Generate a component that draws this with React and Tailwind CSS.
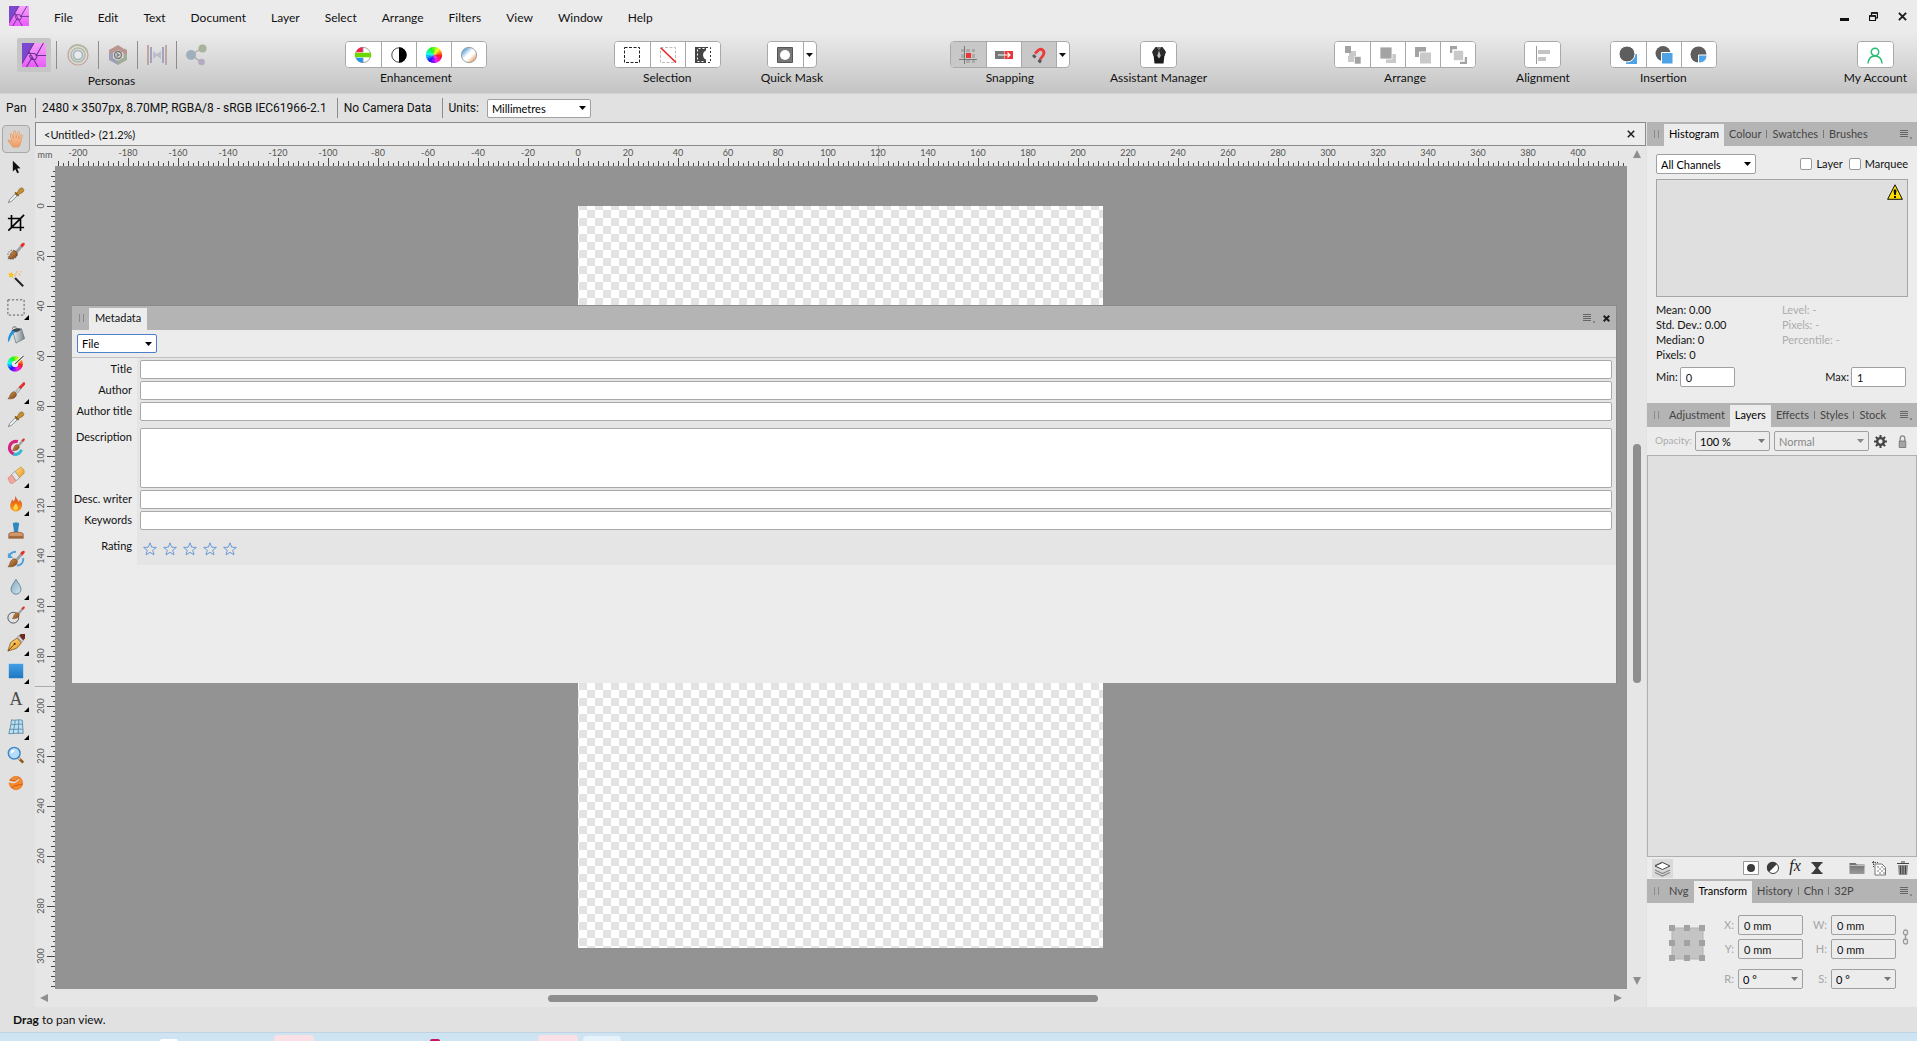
import React, { useState } from 'react';

const menus = ['File', 'Edit', 'Text', 'Document', 'Layer', 'Select', 'Arrange', 'Filters', 'View', 'Window', 'Help'];

const Svg = ({ size = 20, box = 20, children, className = '' }) => (
  <svg width={size} height={size} viewBox={`0 0 ${box} ${box}`} className={`shrink-0 ${className}`} fill="none" aria-hidden="true">
    {children}
  </svg>
);

const Defs = () => (
  <svg width="0" height="0" className="absolute" aria-hidden="true">
    <defs>
      <linearGradient id="pink" x1="0" y1="0" x2="0" y2="1">
        <stop offset="0" stopColor="#f7a0fb" />
        <stop offset="1" stopColor="#e95cf8" />
      </linearGradient>
      <linearGradient id="skin" x1="0" y1="0" x2="0" y2="1">
        <stop offset="0" stopColor="#fcd3ae" />
        <stop offset="1" stopColor="#ee9a63" />
      </linearGradient>
      <linearGradient id="flame" x1="0" y1="0" x2="0" y2="1">
        <stop offset="0" stopColor="#d8431a" />
        <stop offset="1" stopColor="#fba01c" />
      </linearGradient>
      <linearGradient id="sky" x1="0" y1="0" x2="0" y2="1">
        <stop offset="0" stopColor="#429fe6" />
        <stop offset="1" stopColor="#1c76c0" />
      </linearGradient>
      <linearGradient id="gold" x1="0" y1="0" x2="1" y2="1">
        <stop offset="0" stopColor="#ffe08a" />
        <stop offset="1" stopColor="#e6931c" />
      </linearGradient>
      <linearGradient id="wood" x1="0" y1="0" x2="1" y2="1">
        <stop offset="0" stopColor="#d99a52" />
        <stop offset="1" stopColor="#7b4216" />
      </linearGradient>
      <linearGradient id="steel" x1="0" y1="0" x2="1" y2="0">
        <stop offset="0" stopColor="#f0f3f4" />
        <stop offset="1" stopColor="#76858b" />
      </linearGradient>
      <linearGradient id="water" x1="0" y1="0" x2="1" y2="1">
        <stop offset="0" stopColor="#7fa9bf" />
        <stop offset="1" stopColor="#d4e6ee" />
      </linearGradient>
      <linearGradient id="warmcool" x1="0" y1="0" x2="1" y2="1">
        <stop offset="0.1" stopColor="#3d92d4" />
        <stop offset="0.45" stopColor="#ffffff" />
        <stop offset="0.6" stopColor="#ffffff" />
        <stop offset="0.95" stopColor="#e27a32" />
      </linearGradient>
      <linearGradient id="folder" x1="0" y1="0" x2="0" y2="1">
        <stop offset="0" stopColor="#6e6e6e" />
        <stop offset="1" stopColor="#9b9b9b" />
      </linearGradient>
    </defs>
  </svg>
);

const Logo = ({ size }) => (
  <Svg size={size} box={24}>
    <path d="M0 0h24v24H0z" fill="url(#pink)" />
    <path d="M0 0h12L0 20.500z" fill="#7b48cf" />
    <path d="M12 0 0 20.500M7 8.500 16 24M21.500 0 14 13M24 12.500H13.500M4.500 24 10 14.500M6 10.500h7M9 10.500 7.500 13l2 3.500h4l1.500-3-2-3" stroke="#6b3392" strokeWidth="1.100" />
  </Svg>
);

const Caret = ({ className = '' }) => (
  <svg width="7" height="4" viewBox="0 0 7 4" className={className} aria-hidden="true">
    <path d="M0 0h7L3.500 4z" fill="currentColor" />
  </svg>
);

const Close = ({ size = 8, weight = 1.8 }) => (
  <Svg size={size} box={8}>
    <path d="M.8.8l6.400 6.400M7.200.8.8 7.200" stroke="#1c1c1c" strokeWidth={weight} />
  </Svg>
);

const Grip = () => (
  <span className="mr-[5px] flex items-center text-[#8b8b8b]">
    <svg width="5" height="8" viewBox="0 0 5 8" aria-hidden="true"><path d="M.5 0v8M4.500 0v8" stroke="currentColor" /></svg>
  </span>
);

/* Colour wheel built from wedges so it works at any size */
const Wheel = ({ cx, cy, r }) => {
  const steps = 24;
  return Array.from({ length: steps }, (_, i) => {
    const a = (i / steps) * Math.PI * 2;
    const b = ((i + 1.2) / steps) * Math.PI * 2;
    return (
      <path
        key={i}
        d={`M${cx} ${cy}L${cx + r * Math.cos(a)} ${cy + r * Math.sin(a)}A${r} ${r} 0 0 1 ${cx + r * Math.cos(b)} ${cy + r * Math.sin(b)}z`}
        fill={`hsl(${360 - i * 15} 95% 52%)`}
      />
    );
  });
};

const BrushShape = ({ tip = '#e2312b' }) => (
  <>
    <path d="M9.500 10 15 3.500l2.500 2L12 12z" fill="#9ba3a8" />
    <path d="M14.500 3.500 17.500.8l2 .2.200 2-2.700 3z" fill={tip} />
    <path d="M1 18.500c2.500-.8 1.500-6.500 6-8.500 2-.8 4.500.8 4.500 3 0 4-5 6.500-10.500 5.500z" fill="url(#wood)" stroke="#6d3c17" strokeWidth=".6" />
  </>
);

const Picker = () => (
  <>
    <path d="M1.500 18.500 3 15l6-6 2 2-6 6z" fill="#f5f7f8" stroke="#6e7478" strokeWidth=".9" />
    <path d="m9 7 4 4" stroke="#80570f" strokeWidth="2" />
    <path d="m11 8.500 2-4c1-2.200 3-3 4.800-1.800 1.500 1.500 1 3.800-1.300 4.800l-4 2z" fill="#c68f35" stroke="#80570f" strokeWidth=".7" />
  </>
);

const tools = [
  { name: 'View', icon: <path d="M6.500 19c-1.500-2.500-3.500-4.500-5.300-6.600-.6-1.400 1.200-1.800 2.200-.8l2 1.800L3.600 5.200c-.3-1.600 1.600-1.900 2-.5L7.300 9.500 7.400 2c0-1.600 2.100-1.600 2.200 0l.6 7 1.700-6.500c.4-1.500 2.300-1.100 2.100.4L12.900 10l2.300-4.200c.8-1.300 2.400-.4 1.900.9C15.700 10 15.900 15.500 13 19z" fill="url(#skin)" stroke="#d98a55" strokeWidth=".6" /> },
  { name: 'Move', icon: <path d="M6.500 3v12l2.800-2.500 2 4.500 2-.9-2-4.400 3.700-.3z" fill="#111" /> },
  { name: 'Colour picker', icon: <Picker /> },
  { name: 'Crop', icon: <path d="M5 1v14h14M1 5h14v14M1.500 18.500 19 1" stroke="#000" strokeWidth="1.800" /> },
  { name: 'Selection brush', icon: <><BrushShape /><circle cx="6" cy="14" r="5" stroke="#444" strokeWidth="1" strokeDasharray="1.500 1.500" /></> },
  { name: 'Flood select', icon: <><path d="m7 7 11 11" stroke="#222" strokeWidth="2.200" /><path d="m6 6 3 3" stroke="#eee" strokeWidth="2.200" /><path d="M5 2l1 2.500L8.500 5 6.500 6.500 6.800 9 4.500 7.500 2 8.500l.8-2.600L1 4l2.600-.2z" fill="#f7c21a" /><path d="M10 1h2v2h-2zM13 4h2v2h-2zM9 4h1.500v1.500H9zM15 1h1.500v1.500H15z" fill="#f6bd7c" /></> },
  { name: 'Rectangular marquee', more: true, icon: <rect x="1" y="2" width="18" height="17" stroke="#555" strokeDasharray="2.500 2" /> },
  { name: 'Flood fill', icon: <><path d="M6 4.500 16 3l3.500 11L10 19z" fill="url(#steel)" stroke="#566" strokeWidth=".7" /><path d="M4.500 6c2-3 8-5 11-2.500-2 2.800-8 4.500-11 2.500z" fill="#38464c" /><path d="M7 5c-4 2-6 6-6 13 2-1 2.500-4 3.500-6C6 9 8 8 9.500 6.500z" fill="#2294dc" /><path d="M6 3c1-3 4-3 4.500 0v4" stroke="#555" strokeWidth="1" /></> },
  { name: 'Gradient', icon: <><Wheel cx={9} cy={11} r={8.500} /><circle cx="9" cy="11" r="3.500" fill="#e8e8e8" /><path d="M9 11 18.500 2" stroke="#fff" strokeWidth="3" /><path d="M9 11 18.500 2" stroke="#444" strokeWidth="1.200" /></> },
  { name: 'Paint brush', more: true, icon: <><path d="M9.500 10 14 5l2 2-4 5z" fill="#c5cacd" stroke="#777" strokeWidth=".5" /><path d="M13 5.500 18.500 0 20 .5V3l-5 5z" fill="#e2312b" /><path d="M1 18.500c2.500-.8 1.500-5.500 5.500-7.500 2-.8 4 .8 4 2.500 0 3.500-4 6-9.500 5z" fill="url(#wood)" stroke="#6d3c17" strokeWidth=".6" /></> },
  { name: 'Colour replacement', icon: <Picker /> },
  { name: 'Pixel', icon: <><path d="M12 4A7 7 0 1 0 8 18" stroke="#d6247e" strokeWidth="3.500" /><path d="M7 18c4 1 8-1 9-5" stroke="#32b9d6" strokeWidth="3.200" /><g transform="translate(5 0) scale(.75)"><BrushShape /></g></> },
  { name: 'Erase', more: true, icon: <><path d="m9 6 6.500-5L19 4.500V8l-6 6z" fill="url(#gold)" stroke="#b9781b" strokeWidth=".6" /><path d="m5 9.500 4-3.500 5 7-4 3.500z" fill="#e4e6e8" stroke="#888" strokeWidth=".7" /><path d="m1 13.500 4-4 5 7-4 3-2.500-.5z" fill="#f0a79d" stroke="#c67a70" strokeWidth=".6" /></> },
  { name: 'Dodge', more: true, icon: <><path d="M9 1c1 4 3.500 5 4 8l1.500-2.500C17 10 17.500 12 16 15.500c-1.200 2.500-3.500 4-6 4-3.500 0-6.500-2.500-6.500-6.500C3.500 10 5 9 5.500 6L7.500 8C9 6 9.500 4 9 1z" fill="url(#flame)" /><path d="M10 10c1 3 3 4 2 6.500-1 2-4.500 2-5 0-.5-2.500 2-3.500 3-6.500z" fill="#ffd247" /></> },
  { name: 'Clone', icon: <><path d="M6.500 2c0-2 7-2 7 0L12 11H8z" fill="#2f87c4" /><path d="M2 13c3-2.500 13-2.500 16 0v3H2z" fill="#d49a6b" stroke="#87502a" strokeWidth=".8" /><path d="M1.500 16h17v2.500h-17z" fill="#a06436" /></> },
  { name: 'Undo brush', icon: <><path d="M2 8c1-4 4-6 8-6M18 9c.5 5-2 8-7 8.500" stroke="#4ea0dc" strokeWidth="2.200" /><path d="M1 3v6h6z" fill="#4ea0dc" /><BrushShape /></> },
  { name: 'Blur', more: true, icon: <path d="M10 1.500c2 4 5.500 7 5.500 11a5.500 5.500 0 0 1-11 0c0-4 3.500-7 5.500-11z" fill="url(#water)" stroke="#5c8299" strokeWidth="1" /> },
  { name: 'Inpainting', more: true, icon: <><circle cx="7" cy="13" r="6" stroke="#555" strokeWidth="1.100" /><g transform="translate(5 0) scale(.75)"><BrushShape /></g></> },
  { name: 'Pen', more: true, icon: <><path d="M1 19 4 9.500l7-5 5 5.500-5.500 6z" fill="url(#gold)" stroke="#7c4c08" strokeWidth=".8" /><path d="m1.500 18.500 6.500-7" stroke="#5c3400" strokeWidth="1" /><circle cx="8.500" cy="11" r="1.200" fill="#5c3400" /><path d="m11.500 3.500 1.500-1.500 5 5-1.500 2z" fill="#ddd" stroke="#555" strokeWidth=".6" /><path d="M13.500 1.500 15.500 0H20v5l-2 2z" fill="#6b2a1c" /></> },
  { name: 'Rectangle', more: true, icon: <rect x="2" y="2" width="16" height="16" fill="url(#sky)" /> },
  { name: 'Artistic text', more: true, icon: <text x="10" y="17" textAnchor="middle" fontSize="20" fill="#4a4a4a" fontFamily="'Liberation Serif', serif">A</text> },
  { name: 'Mesh warp', more: true, icon: <><path d="M5 2c4 1.500 8-1 12 .5L17.500 17c-6-.5-11 .5-16 .5C3 13 4.500 8 5 2z" fill="#b9e0f3" /><path d="M5 2c4 1.500 8-1 12 .5L18 17c-6-.5-11 .5-16 .5C3 13 4.500 8 5 2zM4.500 7c4 1 8-1 12.800 0M3 12.500c5 .5 9-.5 14.500 0M9 2.500c0 5-2 10-2 15M13 2c.5 5-.8 10-.5 15.500" stroke="#54819b" strokeWidth=".9" /></> },
  { name: 'Zoom', icon: <><path d="m12 12.500 6 6" stroke="#8b5a24" strokeWidth="3" /><path d="m12 12.500 2.500 2.500" stroke="#d9c9a0" strokeWidth="2" /><circle cx="8" cy="8" r="6.500" fill="#b5dcfb" stroke="#3c86c8" strokeWidth="1.600" /><path d="M4 8c0-2.500 2-4 4.500-4 0 3-2 4-4.500 4z" fill="#fff" /></> },
  { name: 'Liquify', icon: <><circle cx="10" cy="10" r="7.500" fill="#f48a2c" stroke="#d9691c" strokeWidth=".6" /><path d="M2 8.500C4 8 5 9.500 8 9.300 11 9 11 6 13.500 5.500" stroke="#e1e1e1" strokeWidth="1.800" /><path d="M3 6.500c2.500 0 4 1.800 6.500 1 2-.8 2-3.500 4.500-3M5 15c3-.5 2.500-2.500 6-2.500 2.500 0 3.500-1.500 6-1" stroke="#c9500f" strokeWidth="1" /></> },
];

const ToolButton = ({ tool, active, onClick }) => (
  <button
    type="button"
    aria-label={tool.name}
    onClick={onClick}
    className={`relative flex h-7 w-7 shrink-0 items-center justify-center rounded-sm border ${active ? 'border-[#a8a8a8] bg-[#d4d4d4]' : 'border-transparent'}`}
  >
    <Svg size={18}>{tool.icon}</Svg>
    {tool.more && (
      <svg width="5" height="5" viewBox="0 0 5 5" className="absolute right-0 bottom-0" aria-hidden="true">
        <path d="M5 0v5H0z" fill="#000" />
      </svg>
    )}
  </button>
);

const BarGroup = ({ label, items, menu, muted = [] }) => (
  <div className="flex flex-col items-center">
    <div className="flex h-[27px] overflow-hidden rounded-sm border border-[#a9a9a9] bg-white">
      {items.map((icon, i) => (
        <button
          key={i}
          type="button"
          aria-label={`${label} ${i + 1}`}
          className={`flex w-[35px] items-center justify-center ${i > 0 ? 'border-l border-[#a9a9a9]' : ''} ${muted.includes(i) ? 'bg-[#c8c8c8]' : 'bg-white'}`}
        >
          {icon}
        </button>
      ))}
      {menu && (
        <button type="button" aria-label={`${label} options`} className="flex w-[13px] items-center justify-center border-l border-[#a9a9a9]">
          <Caret />
        </button>
      )}
    </div>
    <span className="mt-0.5 whitespace-nowrap leading-4">{label}</span>
  </div>
);

const enhancement = [
  <Svg size={18}><circle cx="10" cy="10" r="8.500" fill="#fff" stroke="#999" /><path d="M10 1.500V7H2.200A8.500 8.500 0 0 1 10 1.500z" fill="#f3204c" /><path d="M1 7.500h18v5H1z" fill="#6cd800" /><path d="M10 18.500V13H2.200a8.500 8.500 0 0 0 7.800 5.500z" fill="#1e95ee" /><path d="M10 1.500v5.500M10 13v5.500" stroke="#999" /></Svg>,
  <Svg size={18}><circle cx="10" cy="10" r="8" fill="#fff" stroke="#333" /><path d="M10 1.500a8.500 8.500 0 0 1 0 17z" fill="#000" /></Svg>,
  <Svg size={18}><Wheel cx={10} cy={10} r={9} /></Svg>,
  <Svg size={18}><circle cx="10" cy="10" r="8.500" fill="url(#warmcool)" stroke="#999" /></Svg>,
];

const selection = [
  <Svg size={18} box={18}><rect x="1.500" y="1.500" width="15" height="15" stroke="#222" strokeDasharray="3 1.500" /></Svg>,
  <Svg size={18} box={18}><rect x="1.500" y="1.500" width="15" height="15" stroke="#bbb" strokeDasharray="3 1.500" /><path d="m2 2 15 14.500" stroke="#ee2222" strokeWidth="1.600" /></Svg>,
  <Svg size={18} box={18}><path d="M1 1h11v3.500a5 5 0 0 0 0 9V17H1z" fill="#444" /><path d="M10.500 2.500h-7v13h7" stroke="#fff" strokeDasharray="2 2" /><path d="M12 4.500v9a5 5 0 0 1 0-9z" fill="#fff" /><path d="M12 1.500h4.500v15H12" stroke="#333" strokeDasharray="2 2" /></Svg>,
];

const quickMask = [
  <Svg size={16} box={16}><path d="M.5.5h15v15H.5z" fill="#777" stroke="#555" /><circle cx="8" cy="8" r="5" fill="#fff" /></Svg>,
];

const snapping = [
  <Svg size={18} box={18}><path d="M2 3h3v3H2zM7 3h4v3H7zM13 3h3v3h-3zM2 8h3v4H2zM13 8h3v4h-3zM7 14h4v3H7zM13 14h3v3h-3z" fill="#aaa" /><path d="M5.500 0v18M0 13.500h18" stroke="#777" /><path d="M7 7h5v5H7z" fill="#ee3333" /></Svg>,
  <Svg size={18} box={18}><path d="M0 5h9v8H0z" fill="#777" /><path d="M9.500 5H18v8H9.500z" fill="#ee3333" /><path d="M3 9h12M12.500 6.500 15 9l-2.500 2.500" stroke="#fff" strokeWidth="1.200" /></Svg>,
  <Svg size={18} box={18}><path d="M5 7.500 8 4.500c3-3 8 .5 5 5l-3 4" stroke="#ea3a3a" strokeWidth="2.800" /><path d="m2 10 2-2 2.500 2.500-2 2zM7.500 15l2-2 2.500 2-2 2.500z" fill="#555" /></Svg>,
];

const assistant = [
  <Svg size={18} box={18}><path d="M3 4h12l-1.500 13.500h-9z" fill="#1b1b1b" /><path d="M5.500 1h7L16 6l-1.500 4h-11L2 6z" fill="#2b2b2b" /><path d="m6.500 1 2.500 3.500L11.500 1z" fill="#777" /><path d="m9 4.500 1.800 5.500L9 12.500 7.200 10z" fill="#bdbdbd" /></Svg>,
];

const arrange = [
  <Svg size={18} box={18}><path d="M5 5h7v8H5z" fill="#c9c9c9" /><path d="M1 0h6v7H1z" fill="#a3a3a3" /><path d="M4 10h6v6H4z" fill="#c9c9c9" /><path d="M10.500 10.500h6.500V18h-6.500z" fill="#a3a3a3" stroke="#fff" strokeWidth=".6" /></Svg>,
  <Svg size={18} box={18}><path d="M7 8h10v9H7z" fill="#c9c9c9" /><path d="M1 1h12v12H1z" fill="#a3a3a3" stroke="#fff" strokeWidth=".8" /></Svg>,
  <Svg size={18} box={18}><path d="M1 1h11v10H1z" fill="#a3a3a3" /><path d="M5.500 6h12v12h-12z" fill="#c9c9c9" stroke="#fff" /></Svg>,
  <Svg size={18} box={18}><path d="M1 0h7v7H1zM11 11h7v7h-7z" fill="#a3a3a3" /><path d="M4 4h11v11H4z" fill="#c9c9c9" stroke="#fff" strokeWidth="1.600" /></Svg>,
];

const alignment = [
  <Svg size={18} box={18}><path d="M2.500 0v18" stroke="#999" /><path d="M4 4h12v4H4zM4 11h8v4H4z" fill="#c4c4c4" /></Svg>,
];

const insertion = [
  <Svg size={18} box={18}><path d="M9 8h9v10H7v-3z" fill="#4ea2e6" /><circle cx="8" cy="8" r="8" fill="#5e5e5e" stroke="#fff" /></Svg>,
  <Svg size={18} box={18}><circle cx="8" cy="7.500" r="7.500" fill="#5e5e5e" /><path d="M6.500 6.500H18V18H6.500z" fill="#4ea2e6" stroke="#fff" /></Svg>,
  <Svg size={18} box={18}><circle cx="8.500" cy="8.500" r="8" fill="#5e5e5e" /><path d="M8.500 9H17c0 5-3 8-8.500 8z" fill="#4ea2e6" stroke="#fff" /></Svg>,
];

const account = [
  <Svg size={18} box={18}><circle cx="9" cy="6" r="3.700" stroke="#26bd73" strokeWidth="1.500" /><path d="M2 17.500c.5-5 3.500-7.500 7-7.500s6.500 2.500 7 7.500" stroke="#26bd73" strokeWidth="1.500" /></Svg>,
];

const personas = [
  <Svg size={22} box={22}><circle cx="11" cy="11" r="10" stroke="#c6a29c" strokeWidth="1.200" /><path d="M3 5a10 10 0 0 1 17 2" stroke="#b4b8a0" strokeWidth="2" /><circle cx="11" cy="11" r="7" stroke="#b3bca2" strokeWidth="1.600" /><circle cx="11" cy="11" r="4.500" fill="#eaeaea" stroke="#a3b4c2" strokeWidth="1.600" /></Svg>,
  <Svg size={22} box={22}><path d="M11 1 2 6v5l9-5 6 3.500V5z" fill="#b99690" /><path d="M17 4.500 20 6v6l-3-2z" fill="#b99690" /><path d="M2 10v6l9 5v-4l-5-3V8z" fill="#9d9fb4" /><path d="M20 11.500V16l-9 5v-4.500l5.500-3v-4z" fill="#9fae97" /><circle cx="11" cy="11" r="3.500" stroke="#777" strokeWidth="1.400" /><path d="m9.500 8.500 4 2.500-4 2.500z" fill="#8b8b8b" /></Svg>,
  <Svg size={22} box={22}><path d="M2 1v20M20 1v20" stroke="#bd9f9a" strokeWidth="1.800" /><path d="M5 3v16M17 3v16" stroke="#a1a4c0" strokeWidth="2" /><path d="M7 7l4 3 4-3v8l-4-3-4 3z" fill="#bcbccb" /></Svg>,
  <Svg size={22} box={22}><path d="m6 11 11-7M6 11l10 7" stroke="#a9a9a9" strokeWidth="1.200" /><circle cx="6" cy="11" r="5" fill="#9fb0bd" /><circle cx="17.500" cy="4.500" r="4" fill="#a7b39c" /><circle cx="16.500" cy="18" r="3.300" fill="#b3abc0" /></Svg>,
];

const Select = ({ id, label, options, className = '', tone = 'text-black', caret = 'text-black' }) => (
  <div className={`relative rounded-xs border ${className}`}>
    <select id={id} aria-label={label} className={`block h-full w-full appearance-none bg-transparent pl-1 font-['Lato','Open_Sans',sans-serif] text-[11px] leading-none outline-none ${tone}`}>
      {options.map((o) => (
        <option key={o}>{o}</option>
      ))}
    </select>
    <Caret className={`pointer-events-none absolute top-1/2 right-1 -translate-y-1/2 ${caret}`} />
  </div>
);

const MenuLines = () => (
  <Svg size={12} box={12}>
    <path d="M0 2.500h8M0 4.500h8M0 6.500h8M0 8.500h8" stroke="#666" />
    <path d="M10 9h2v2h-2z" fill="#888" />
  </Svg>
);

const TabStrip = ({ tabs, active, onSelect }) => (
  <div className="flex h-6 shrink-0 items-stretch bg-[#b4b4b4] pr-[5px] pl-[7px] text-[11px]">
    <Grip />
    {tabs.map((tab, i) => (
      <React.Fragment key={tab}>
        {i > 0 && tab !== active && tabs[i - 1] !== active && <span className="my-2 w-px self-stretch bg-[#777]" />}
        <button type="button" onClick={() => onSelect(tab)} className={`border-t-2 border-[#b4b4b4] px-[5px] pb-0.5 ${tab === active ? 'bg-[#ececec] text-black' : 'text-[#444]'}`}>
          {tab}
        </button>
      </React.Fragment>
    ))}
    <button type="button" aria-label="Panel options" className="ml-auto self-center"><MenuLines /></button>
  </div>
);

const RULE = 2.5;

const HorizontalRuler = () => {
  const origin = 523;
  const ticks = [];
  for (let mm = -208; mm <= 1000; mm += 2) ticks.push(mm);
  return (
    <svg className="h-5 min-w-0 flex-1" height="20" aria-hidden="true">
      <g shapeRendering="crispEdges" stroke="#4a4a4a">
        {ticks.map((mm) => (
          <line key={mm} x1={origin + mm * RULE} x2={origin + mm * RULE} y1={mm % 20 === 0 ? 12 : mm % 4 === 0 ? 15 : 17} y2="20" />
        ))}
        <line x1="823" x2="823" y1="0" y2="20" stroke="#aaa" />
      </g>
      <g fontSize="9" fill="#555" textAnchor="middle">
        {ticks.filter((mm) => mm % 20 === 0 && mm <= 400).map((mm) => (
          <text key={mm} x={origin + mm * RULE} y="10">{mm}</text>
        ))}
      </g>
    </svg>
  );
};

const VerticalRuler = () => {
  const origin = 40;
  const ticks = [];
  for (let mm = -14; mm <= 700; mm += 2) ticks.push(mm);
  return (
    <svg className="w-5 shrink-0" width="20" height="100%" aria-hidden="true">
      <g shapeRendering="crispEdges" stroke="#4a4a4a">
        {ticks.map((mm) => (
          <line key={mm} y1={origin + mm * RULE} y2={origin + mm * RULE} x1={mm % 20 === 0 ? 12 : mm % 4 === 0 ? 16 : 18} x2="20" />
        ))}
        <line x1="0" x2="20" y1="520" y2="520" stroke="#aaa" />
      </g>
      <g fontSize="9" fill="#555" textAnchor="middle">
        {ticks.filter((mm) => mm % 20 === 0 && mm <= 300).map((mm) => (
          <text key={mm} transform={`translate(9 ${origin + mm * RULE}) rotate(-90)`}>{mm}</text>
        ))}
      </g>
    </svg>
  );
};

const Field = ({ id, label, area }) => (
  <div className={`flex ${area ? 'mt-[5px]' : ''}`}>
    <label htmlFor={id} className="w-[65px] shrink-0 pt-px pr-[5px] text-right leading-4 whitespace-nowrap">{label}</label>
    <div className="min-w-0 flex-1 bg-[#e5e5e5] pr-1 pl-[3px]">
      {area ? (
        <textarea id={id} className="block h-[60px] w-full resize-none rounded-xs border border-[#a9a9a9] bg-white px-1 outline-none" />
      ) : (
        <input id={id} type="text" className="block h-[19px] w-full rounded-xs border border-[#a9a9a9] bg-white px-1 outline-none" />
      )}
    </div>
  </div>
);

const MetadataWindow = () => {
  const [rating, setRating] = useState(0);
  return (
    <section className="absolute top-[139px] right-[10px] left-[17px] h-[378px] border-t border-r border-[#8a8a8a] bg-[#ececec] text-[11px]">
      <div className="flex h-6 items-stretch bg-[#b4b4b4] pr-1.5 pl-[7px]">
        <Grip />
        <button type="button" className="border-t-2 border-[#b4b4b4] bg-[#ececec] px-1.5 pb-0.5">Metadata</button>
        <div className="ml-auto flex items-center gap-2">
          <MenuLines />
          <button type="button" aria-label="Close"><Close size={7} weight={2.2} /></button>
        </div>
      </div>
      <div className="flex h-7 items-center border-b border-[#c2c2c2] pl-[5px]">
        <Select label="Metadata category" options={['File']} className="h-[19px] w-20 border-[#4c7fc9] bg-white" />
      </div>
      <form className="flex flex-col gap-0.5 bg-[linear-gradient(to_right,#ececec_65px,#e5e5e5_65px)] pt-0.5">
        <Field id="title" label="Title" />
        <Field id="author" label="Author" />
        <Field id="author-title" label="Author title" />
        <Field id="description" label="Description" area />
        <Field id="writer" label="Desc. writer" />
        <Field id="keywords" label="Keywords" />
        <div className="flex h-[33px] items-center">
          <span className="w-[65px] pr-[5px] pb-1 text-right">Rating</span>
          <div className="flex gap-1.5 pl-1.5">
            {[1, 2, 3, 4, 5].map((n) => (
              <button key={n} type="button" aria-label={`${n} stars`} onClick={() => setRating(n)}>
                <Svg size={14} box={14}>
                  <path d="m7 .8 1.700 4.400 4.700.2-3.700 2.900 1.300 4.600L7 10.300 3 12.900l1.300-4.600L.6 5.400l4.700-.2z" fill={n <= rating ? '#6c9bd6' : 'none'} stroke="#6c9bd6" />
                </Svg>
              </button>
            ))}
          </div>
        </div>
      </form>
    </section>
  );
};

const Canvas = () => (
  <div className="relative min-w-0 flex-1 overflow-hidden bg-[#939393]">
    <div className="absolute top-10 left-[523px] h-[742px] w-[525px] bg-white bg-[conic-gradient(#e3e3e3_25%,#fff_0_50%,#e3e3e3_0_75%,#fff_0)] bg-[length:16px_16px] bg-[position:-7px_-4px]" />
    <MetadataWindow />
  </div>
);

const Arrow = ({ d }) => (
  <button type="button" aria-label="Scroll" className="flex shrink-0">
    <Svg size={8} box={8}><path d={d} fill="#8e8e8e" /></Svg>
  </button>
);

const DocumentArea = () => (
  <main className="flex min-w-0 flex-1 flex-col bg-[#e6e6e6]">
    <div className="flex h-6 shrink-0 items-center border border-[#8a8a8a] bg-[#ececec] pr-2.5 pl-2 text-[11px]">
      <span className="pt-0.5">&lt;Untitled&gt; (21.2%)</span>
      <button type="button" aria-label="Close document" className="ml-auto"><Close size={8} weight={1.500} /></button>
    </div>
    <div className="flex min-h-0 flex-1">
      <div className="flex min-w-0 flex-1 flex-col">
        <div className="flex h-5 shrink-0">
          <span className="w-5 pt-[3px] text-center text-[9px] leading-3 text-[#555]">mm</span>
          <HorizontalRuler />
        </div>
        <div className="flex min-h-0 flex-1">
          <VerticalRuler />
          <Canvas />
        </div>
      </div>
      <div className="flex w-[19px] shrink-0 flex-col items-center py-1">
        <Arrow d="M4 0l4 8H0z" />
        <div className="flex w-2 flex-1 flex-col">
          <div className="flex-[285]" />
          <div className="flex-[239] rounded-full bg-[#8e8e8e]" />
          <div className="flex-[293]" />
        </div>
        <Arrow d="M4 8l4-8H0z" />
      </div>
    </div>
    <div className="flex h-[18px] shrink-0 items-center pr-6 pl-[5px]">
      <Arrow d="M0 4l8-4v8z" />
      <div className="flex h-[7px] flex-1">
        <div className="flex-[500]" />
        <div className="flex-[550] rounded-full bg-[#8e8e8e]" />
        <div className="flex-[516]" />
      </div>
      <Arrow d="M8 4L0 0v8z" />
    </div>
  </main>
);

const HistogramPanel = () => {
  const [tab, setTab] = useState('Histogram');
  return (
    <section className="flex h-[281px] shrink-0 flex-col bg-[#ececec]">
      <TabStrip tabs={['Histogram', 'Colour', 'Swatches', 'Brushes']} active={tab} onSelect={setTab} />
      <div className="px-[9px] pt-2">
        <div className="flex items-center">
          <Select label="Channels" options={['All Channels']} className="h-5 w-[100px] border-[#a0a0a0] bg-white" />
          <label className="ml-auto flex items-center gap-1">
            <input type="checkbox" className="h-3 w-3 appearance-none rounded-xs border border-[#999] bg-white" />
            Layer
          </label>
          <label className="ml-1.5 flex items-center gap-1">
            <input type="checkbox" className="h-3 w-3 appearance-none rounded-xs border border-[#999] bg-white" />
            Marquee
          </label>
        </div>
        <div className="mt-[5px] flex h-[118px] justify-end border border-[#a5a5a5] bg-[#dfdfdf] p-1">
          <Svg size={16} box={16}><path d="M8 .8 15.400 15.300H.6z" fill="#fedd00" stroke="#111" /><path d="M6.500 6.500 8 5l1.500 1.500L8.800 11H7.200zM7 12h2v2H7z" fill="#111" /></Svg>
        </div>
        <div className="mt-[5px] grid grid-cols-2 leading-[15px]">
          <div>
            <p>Mean: 0.00</p>
            <p>Std. Dev.: 0.00</p>
            <p>Median: 0</p>
            <p>Pixels: 0</p>
          </div>
          <div className="text-[#adadad]">
            <p>Level: -</p>
            <p>Pixels: -</p>
            <p>Percentile: -</p>
          </div>
        </div>
        <div className="mt-[5px] flex items-center justify-between pr-0.5">
          <label className="flex items-center gap-0.5">
            Min:
            <input type="text" defaultValue="0" className="h-5 w-[55px] rounded-xs border border-[#a0a0a0] bg-white px-[5px]" />
          </label>
          <label className="flex items-center gap-0.5">
            Max:
            <input type="text" defaultValue="1" className="h-5 w-[55px] rounded-xs border border-[#a0a0a0] bg-white px-[5px]" />
          </label>
        </div>
      </div>
    </section>
  );
};

const layerActions = [
  { name: 'Mask', icon: <><path d="M.5 1.500h15v13H.5z" fill="#fff" stroke="#999" /><circle cx="8" cy="8" r="4" fill="#3c3c3c" /></> },
  { name: 'Adjustments', icon: <><circle cx="8" cy="8" r="5.500" fill="#fff" stroke="#3c3c3c" /><path d="M12 4A5.700 5.700 0 1 0 4 12z" fill="#3c3c3c" /></> },
  { name: 'Live filters', icon: <path d="M2.500 2h11v1.500h-1L9 8l3.500 4.500h1V14h-11v-1.500h1L7 8 3.500 3.500h-1z" fill="#3c3c3c" /> },
];

const LayerAction = ({ action }) => (
  <button type="button" aria-label={action.name}><Svg size={16} box={16}>{action.icon}</Svg></button>
);

const LayersPanel = () => {
  const [tab, setTab] = useState('Layers');
  const [mask, adjustments, filters] = layerActions;
  return (
    <section className="flex min-h-0 flex-1 flex-col bg-[#ececec]">
      <TabStrip tabs={['Adjustment', 'Layers', 'Effects', 'Styles', 'Stock']} active={tab} onSelect={setTab} />
      <div className="flex h-7 shrink-0 items-center pr-2 pl-2">
        <label htmlFor="opacity" className="w-10 text-[10px] text-[#adadad]">Opacity:</label>
        <Select id="opacity" label="Opacity" options={['100 %']} className="h-5 w-[75px] border-[#a0a0a0]" caret="text-[#777]" />
        <Select label="Blend mode" options={['Normal']} className="ml-1 h-5 w-[95px] border-[#a0a0a0]" tone="text-[#888]" caret="text-[#888]" />
        <button type="button" aria-label="Blend options" className="ml-[5px]">
          <Svg size={13} box={14}>
            <circle cx="7" cy="7" r="3.600" stroke="#444" strokeWidth="2.600" />
            <path d="M7 0v3M7 11v3M0 7h3M11 7h3M2 2l2 2M10 10l2 2M12 2l-2 2M4 10l-2 2" stroke="#444" strokeWidth="2.200" />
          </Svg>
        </button>
        <button type="button" aria-label="Lock" className="ml-auto">
          <Svg size={13} box={14}>
            <path d="M4.500 7V4c0-4 5-4 5 0v3" stroke="#888" strokeWidth="1.400" />
            <path d="M3.500 6.500h7v7h-7z" fill="#a5a5a5" stroke="#777" />
          </Svg>
        </button>
      </div>
      <div className="flex-1 border border-[#b0b0b0] bg-[#e0e0e0]" />
      <div className="flex h-[22px] shrink-0 items-center gap-1.5 pr-1.5 pl-[5px]">
        <button type="button" aria-label="Edit all layers" className="mr-auto bg-[#dadada] px-0.5 py-px">
          <Svg size={17} box={17}>
            <path d="m1 12.500 7.500 3.500 7.500-3.500M1 10l7.500 3.500L16 10M1 5.500 8.500 2" stroke="#888" strokeWidth="1.300" />
            <path d="M8.500 2.500 16 6l-7.500 3.500L1 6z" fill="#fff" stroke="#444" />
          </Svg>
        </button>
        <LayerAction action={mask} />
        <LayerAction action={adjustments} />
        <button type="button" aria-label="Layer effects" className="w-4 pb-1 text-center font-['Liberation_Serif',serif] text-base leading-4 text-[#222] italic">fx</button>
        <LayerAction action={filters} />
        <button type="button" aria-label="Group" className="ml-[18px]">
          <Svg size={16} box={16}><path d="M.5 3h6l1.500 1.500h7.500V14H.5z" fill="url(#folder)" /><path d="M1 5.500h14" stroke="#bbb" /></Svg>
        </button>
        <button type="button" aria-label="Add pixel layer">
          <Svg size={16} box={16}><path d="M4 4h7l3.500 3.500V15H4z" fill="#fff" stroke="#777" /><path d="M6 6h2v2H6zM10 6h2v2h-2zM8 8h2v2H8zM12 8h2v2h-2zM6 10h2v2H6zM10 10h2v2h-2zM8 12h2v2H8zM12 12h2v2h-2z" fill="#bbb" /><path d="M1 2.500h6M2.500 1v6" stroke="#444" strokeDasharray="1.500 1" /></Svg>
        </button>
        <button type="button" aria-label="Delete layer" className="ml-0.5">
          <Svg size={16} box={16}><path d="M3 5h10l-.8 10H3.800z" fill="#8d8d8d" /><path d="M2 3.500h12M6 2h4M5.500 6v8M8 6v8M10.500 6v8" stroke="#444" /></Svg>
        </button>
      </div>
    </section>
  );
};

const Measure = ({ id, label, value }) => (
  <div className="flex items-center justify-end gap-1">
    <label htmlFor={id} className="text-[#a5a5a5]">{label}</label>
    <input id={id} type="text" defaultValue={value} className="h-5 w-[65px] rounded-xs border border-[#a0a0a0] px-[5px]" />
  </div>
);

const Angle = ({ id, label }) => (
  <div className="flex items-center justify-end gap-1 pt-1.5">
    <label htmlFor={id} className="text-[#a5a5a5]">{label}</label>
    <Select id={id} options={['0 °']} className="h-5 w-[65px] border-[#a0a0a0]" caret="text-[#777]" />
  </div>
);

const TransformPanel = () => {
  const [tab, setTab] = useState('Transform');
  return (
    <section className="flex h-32 shrink-0 flex-col bg-[#ececec]">
      <TabStrip tabs={['Nvg', 'Transform', 'History', 'Chn', '32P']} active={tab} onSelect={setTab} />
      <div className="flex items-start pt-3 pr-2 pl-[22px]">
        <Svg size={37} box={37} className="mt-2.5">
          <path d="M3 3h31v31H3z" fill="#c4c4c4" stroke="#b2b2b2" />
          <path d="M0 0h6v6H0zM15 0h6v6h-6zM30 0h6v6h-6zM0 15h6v6H0zM15 15h6v6h-6zM30 15h6v6h-6zM0 30h6v6H0zM15 30h6v6h-6zM30 30h6v6h-6z" fill="#a2a2a2" />
        </Svg>
        <div className="ml-auto grid grid-cols-[82px_89px] gap-x-1 gap-y-1">
          <Measure id="x" label="X:" value="0 mm" />
          <Measure id="w" label="W:" value="0 mm" />
          <Measure id="y" label="Y:" value="0 mm" />
          <Measure id="h" label="H:" value="0 mm" />
          <Angle id="r" label="R:" />
          <Angle id="s" label="S:" />
        </div>
        <button type="button" aria-label="Lock aspect ratio" className="mt-3.5 ml-1.5">
          <svg width="7" height="16" viewBox="0 0 7 16" fill="none" stroke="#999" strokeWidth="1.300" aria-hidden="true">
            <rect x="1.500" y="1" width="4" height="5" rx="2" />
            <rect x="1.500" y="10" width="4" height="5" rx="2" />
            <path d="M3.500 5v6" />
          </svg>
        </button>
      </div>
    </section>
  );
};

const Divider = ({ className }) => <span className={`h-5 w-px shrink-0 bg-[#8c8c8c] ${className}`} />;

const App = () => {
  const [tool, setTool] = useState('View');

  return (
    <div className="flex h-screen flex-col overflow-hidden bg-[#e1e1e1] font-['Lato','Open_Sans',sans-serif] text-xs text-[#111]">
      <Defs />
      <header className="shrink-0 bg-[linear-gradient(to_bottom,#ebebeb_35%,#c4c4c4)]">
        <div className="flex h-8 items-center pr-2.5 pl-[9px]">
          <Logo size={20} />
          <nav className="ml-[13px] flex items-center gap-px">
            {menus.map((m) => (
              <button key={m} type="button" className="px-3 pt-1">{m}</button>
            ))}
          </nav>
          <div className="ml-auto flex items-center gap-5">
            <button type="button" aria-label="Minimise"><Svg size={9} box={9}><path d="M0 6h9v3H0z" fill="#111" /></Svg></button>
            <button type="button" aria-label="Restore"><Svg size={9} box={9}><path d="M2.500 3V.8h6v5H6.500M.5 3.800h6v4.700h-6z" stroke="#111" strokeWidth="1.200" /><path d="M2.500 1h6M.5 4h6" stroke="#111" strokeWidth="1.600" /></Svg></button>
            <button type="button" aria-label="Close"><Close size={9} weight={1.700} /></button>
          </div>
        </div>
        <div className="flex h-[61px] items-start justify-between pr-2.5 pl-[17px]">
          <div className="flex w-[201px] flex-col pt-1.5">
            <div className="flex items-center">
              <button type="button" aria-label="Photo persona" className="mr-[5px] flex h-[34px] w-[34px] items-center justify-center rounded-xs bg-[#c6c6c6]">
                <Logo size={24} />
              </button>
              {personas.map((icon, i) => (
                <React.Fragment key={i}>
                  <span className="h-7 w-px bg-[#8c8c8c]" />
                  <button type="button" aria-label={`Persona ${i + 2}`} className={`flex items-center justify-center ${i === 0 ? 'w-[41px]' : 'w-[38px]'}`}>{icon}</button>
                </React.Fragment>
              ))}
            </div>
            <span className="mt-px mr-3 text-center leading-4">Personas</span>
          </div>
          <div className="flex pt-[9px]"><BarGroup label="Enhancement" items={enhancement} /></div>
          <div className="flex gap-10 pt-[9px]">
            <BarGroup label="Selection" items={selection} />
            <BarGroup label="Quick Mask" items={quickMask} menu />
          </div>
          <div className="flex gap-10 pt-[9px]">
            <BarGroup label="Snapping" items={snapping} menu muted={[0, 2]} />
            <BarGroup label="Assistant Manager" items={assistant} />
          </div>
          <div className="flex gap-10 pt-[9px]">
            <BarGroup label="Arrange" items={arrange} />
            <BarGroup label="Alignment" items={alignment} />
            <BarGroup label="Insertion" items={insertion} />
          </div>
          <div className="flex pt-[9px]"><BarGroup label="My Account" items={account} /></div>
        </div>
      </header>

      <div className="flex h-[29px] shrink-0 items-center border-t border-[#d4d4d4] pl-1.5 font-['Roboto','Open_Sans',sans-serif] whitespace-nowrap">
        <span className="w-[29px]">Pan</span>
        <Divider className="mr-1.5" />
        <span>2480 × 3507px, 8.70MP, RGBA/8 - sRGB IEC61966-2.1</span>
        <Divider className="mr-1.5 ml-2.5" />
        <span>No Camera Data</span>
        <Divider className="mr-1.5 ml-2.5" />
        <label htmlFor="units">Units:</label>
        <Select id="units" options={['Millimetres']} className="ml-2 h-[19px] w-[104px] border-[#a0a0a0] bg-white" />
      </div>

      <div className="flex min-h-0 flex-1">
        <aside className="flex w-[35px] shrink-0 flex-col overflow-hidden pt-[3px] pl-0.5">
          {tools.map((t) => (
            <ToolButton key={t.name} tool={t} active={t.name === tool} onClick={() => setTool(t.name)} />
          ))}
        </aside>
        <DocumentArea />
        <aside className="ml-px flex w-[270px] shrink-0 flex-col text-[11px]">
          <HistogramPanel />
          <LayersPanel />
          <TransformPanel />
        </aside>
      </div>

      <footer className="shrink-0">
        <p className="h-[25px] pl-[13px] leading-[25px]"><b>Drag</b> to pan view.</p>
        <div className="flex h-[9px] items-end overflow-hidden border-t border-[#bfd3e2] bg-[#cfe4f3] pl-40">
          <span className="h-0.5 w-[18px] rounded-t-full bg-white" />
          <span className="ml-24 h-1.5 w-10 rounded-t-sm bg-[#fbe1e5]" />
          <span className="ml-[116px] h-0.5 w-2.5 rounded-t-full bg-[#c8175d]" />
          <span className="ml-[98px] h-1.5 w-10 rounded-t-sm bg-[#fbe1e5]" />
          <span className="ml-[5px] h-[5px] w-[38px] rounded-t-sm bg-[#e7f3fb]" />
        </div>
      </footer>
    </div>
  );
};

export default App;
